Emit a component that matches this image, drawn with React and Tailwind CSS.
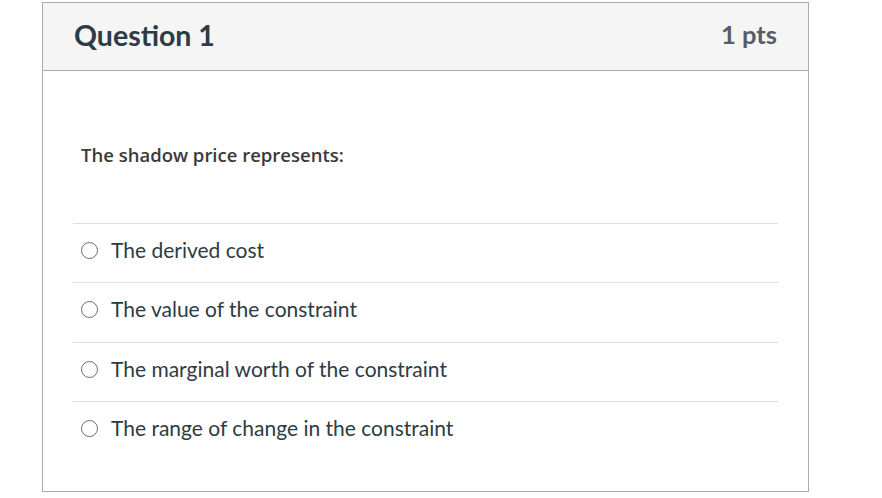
export default function App() {
  const answers = [
    "The derived cost",
    "The value of the constraint",
    "The marginal worth of the constraint",
    "The range of change in the constraint",
  ];
  const heights = ["h-[59px]", "h-[60px]", "h-[59px]", "h-[60px]"];
  return (
    <div className="w-[882px] h-[498px] bg-white pl-[42px] pt-[2px]" style={{ fontFamily: "Lato, 'Liberation Sans', sans-serif" }}>
      <div className="w-[767px] h-[490px] border border-[#ababab] flex flex-col">
        <div className="h-[68px] bg-[#f5f5f5] border-b border-[#ababab] flex items-center justify-between px-[31px] pb-[3px]">
          <div className="text-[28.5px] font-bold text-[#2d3b45] leading-none">Question 1</div>
          <div className="text-[25.5px] font-bold text-[#555e66] leading-none">1 pts</div>
        </div>
        <div className="px-[30px] pt-[72px]">
          <div
            className="pl-[8px] text-[18.5px] font-semibold text-[#3a3a3a] leading-[24px] mb-[56px]"
            style={{ fontFamily: "'Open Sans', 'Noto Sans', sans-serif" }}
          >
            The shadow price represents:
          </div>
          {answers.map((a, i) => (
            <div key={i} className={`border-t border-[#dedede] ${heights[i]} pt-[14px] pl-[8px] flex items-start`}>
              <div className="flex items-center h-[24px]">
                <span className="w-[17px] h-[17px] rounded-full border-[1.5px] border-[#6b6b6b] bg-white inline-block" />
                <span className="ml-[13px] text-[21px] text-[#2d3b45] leading-[24px]">{a}</span>
              </div>
            </div>
          ))}
        </div>
      </div>
    </div>
  );
}
